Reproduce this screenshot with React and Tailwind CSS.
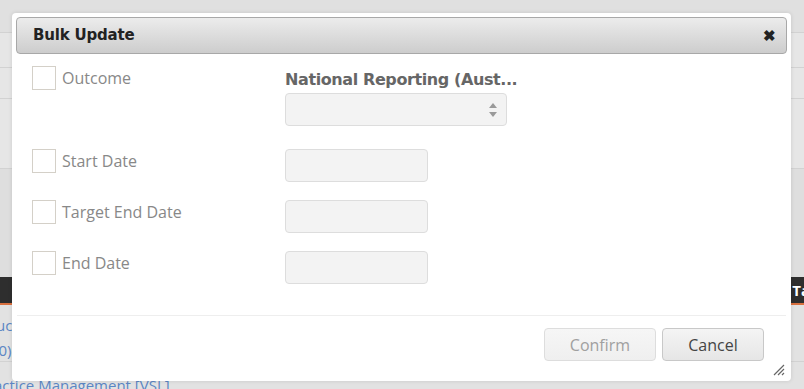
import React from "react";

function Check() {
  return <div className="w-[24px] h-[24px] border border-[#d4d0c8] bg-white shrink-0" />;
}

function Row({ label, children }) {
  return (
    <div className="flex items-start">
      <div className="w-[253px] flex items-center gap-[6px]">
        <Check />
        <span className="text-[16px] text-[#888888] leading-[24px]">{label}</span>
      </div>
      {children}
    </div>
  );
}

export default function App() {
  return (
    <div
      className="relative w-[804px] h-[389px] overflow-hidden bg-[#e2e2e2]"
      style={{ fontFamily: '"Open Sans", "Noto Sans", sans-serif' }}
    >
      {/* background page */}
      <div className="flex flex-col h-full">
        <div className="h-[33px] shrink-0 border-b border-[#d2d2d2] bg-[#e0e0e0]" />
        <div className="h-[35px] shrink-0 border-b border-[#d2d2d2] bg-[#e6e6e6]" />
        <div className="h-[31px] shrink-0 border-b border-[#d2d2d2] bg-[#e6e6e6]" />
        <div className="h-[70px] shrink-0 border-b border-[#d2d2d2] bg-[#e6e6e6]" />
        <div className="h-[108px] shrink-0 bg-[#dedede]" />
        <div className="h-[28px] shrink-0 bg-[#2e2e2e] border-b-[2px] border-[#d9703f] flex justify-end items-center">
          <span className="text-white font-bold text-[15px] mr-[-6px]">Ta</span>
        </div>
        <div className="h-[57px] shrink-0 border-b border-[#d2d2d2] bg-[#e2e2e2] flex flex-col text-[15px] text-[#5b86c4] pt-[8px] leading-[25px]">
          <span className="ml-[-4px]">uct</span>
          <span className="ml-[-6px]">(0)</span>
        </div>
        <div className="flex-1 bg-[#e2e2e2] text-[15px] text-[#5b86c4] leading-[20px] pt-[13px]">
          <span className="ml-[-6px] whitespace-nowrap">actice Management [VSL]</span>
        </div>
      </div>

      {/* dialog */}
      <div className="absolute left-[12px] top-[13px] w-[779px] h-[368px] bg-white rounded-[4px] shadow-[0_0_4px_rgba(0,0,0,0.12)] p-[4px] flex flex-col">
        <div className="h-[37px] shrink-0 rounded-[4px] border border-[#a8a8a8] bg-gradient-to-b from-[#ececec] to-[#cdcdcd] flex items-center justify-between pl-[16px] pr-[10px]">
          <span
            className="text-[15px] font-bold text-[#222222]"
            style={{ fontFamily: '"DejaVu Sans", sans-serif', letterSpacing: "-0.2px" }}
          >
            Bulk Update
          </span>
          <span className="text-[15px] font-bold text-[#222222] leading-none">✖</span>
        </div>

        <div className="flex flex-col pl-[16px] pt-[12px] gap-[23px] h-[261px]">
          <Row label="Outcome">
            <div className="flex flex-col">
              <span
                className="text-[16px] font-bold text-[#666666] leading-[24px] mt-[2px]"
                style={{ fontFamily: '"DejaVu Sans", sans-serif', letterSpacing: "-0.4px" }}
              >
                National Reporting (Aust...
              </span>
              <div className="mt-[1px] w-[222px] h-[33px] bg-[#f3f3f3] border border-[#dddddd] rounded-[4px] flex items-center justify-end pr-[9px]">
                <svg width="8" height="16" viewBox="0 0 8 16">
                  <path d="M0 6 L4 1 L8 6 Z" fill="#9a9a9a" />
                  <path d="M0 10 L4 15 L8 10 Z" fill="#9a9a9a" />
                </svg>
              </div>
            </div>
          </Row>
          <div className="flex flex-col gap-[18px]">
            <Row label="Start Date">
              <div className="w-[143px] h-[33px] bg-[#f3f3f3] border border-[#dddddd] rounded-[4px]" />
            </Row>
            <Row label="Target End Date">
              <div className="w-[143px] h-[33px] bg-[#f3f3f3] border border-[#dddddd] rounded-[4px]" />
            </Row>
            <Row label="End Date">
              <div className="w-[143px] h-[33px] bg-[#f3f3f3] border border-[#dddddd] rounded-[4px]" />
            </Row>
          </div>
        </div>

        <div className="border-t border-[#eeeeee] mx-[1px] flex justify-end gap-[6px] pt-[12px] pr-[22px] relative flex-1">
          <button className="w-[112px] h-[33px] rounded-[4px] border border-[#dddddd] bg-gradient-to-b from-[#f6f6f6] to-[#efefef] text-[16px] text-[#a0a0a0]">
            Confirm
          </button>
          <button className="w-[102px] h-[33px] rounded-[4px] border border-[#c8c8c8] bg-gradient-to-b from-[#f4f4f4] to-[#e6e6e6] text-[16px] text-[#444444]">
            Cancel
          </button>
          <svg className="absolute right-[1px] bottom-[1px]" width="12" height="12" viewBox="0 0 12 12">
            <path d="M11 1 L1 11 M11 5 L5 11 M11 9 L9 11" stroke="#666" strokeWidth="1.2" />
          </svg>
        </div>
      </div>
    </div>
  );
}
